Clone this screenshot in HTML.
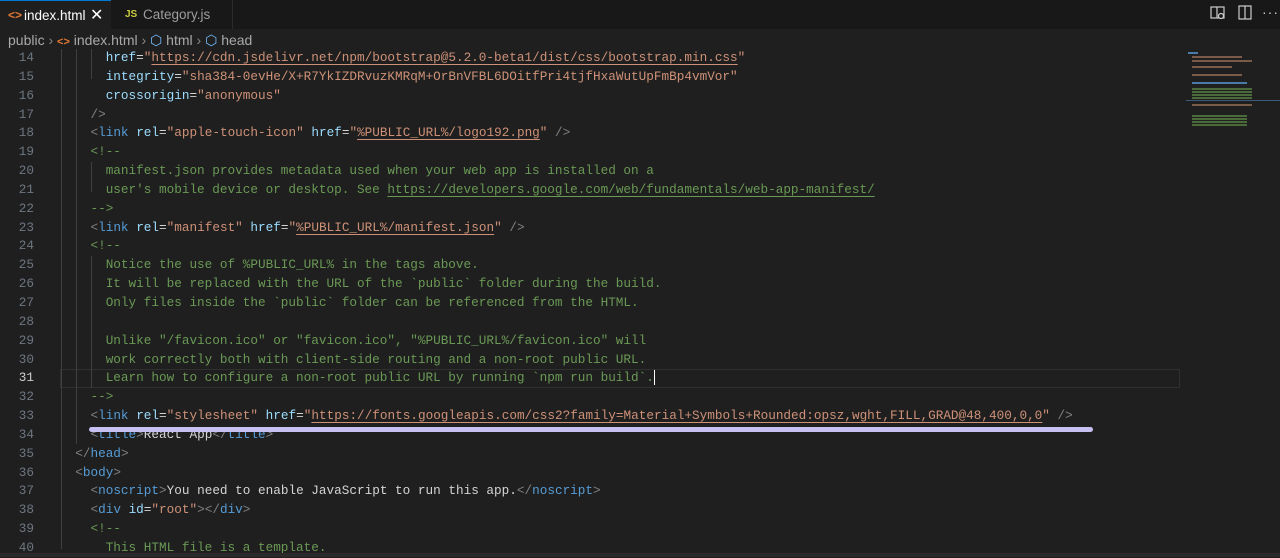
<!DOCTYPE html>
<html><head><meta charset="utf-8">
<style>
*{margin:0;padding:0;box-sizing:border-box}
body{width:1280px;height:557px;background:#1f1f1f;overflow:hidden;position:relative;font-family:"Liberation Sans",sans-serif}
.tabs{position:absolute;left:0;top:0;width:1280px;height:29px;background:#181818}
.tab{position:absolute;top:0;height:29px;font-size:13.5px;line-height:29px}
.t1{left:0;width:111px;background:#1f1f1f;color:#fff;border-top:1px solid #0078d4}
.t2{left:111px;width:122px;background:#181818;color:#9d9d9d;border-right:1px solid #2b2b2b}
.bc{position:absolute;top:29px;left:0;height:22px;line-height:22px;font-size:14px;color:#a9a9a9;padding-left:8px}
.code{position:absolute;left:0;top:49px;font-family:"Liberation Mono",monospace;font-size:12.7px;color:#d4d4d4}
.l{height:18.85px;line-height:18.85px;white-space:pre;position:relative}
.n{display:inline-block;width:34px;text-align:right;color:#6e7681;margin-right:26px}
.cur .n{color:#cccccc}
.p{color:#808080}.tg{color:#569cd6}.a{color:#9cdcfe}.s{color:#ce9178}.c{color:#6a9955}.e{color:#d4d4d4}
.u{text-decoration:underline;text-underline-offset:3px}
.guide{position:absolute;width:1px;background:#404040}
</style></head><body>
<div class="tabs">
 <div class="tab t1"><span style="position:absolute;left:8px;color:#e37933;font-size:12px;font-weight:bold">&lt;&gt;</span><span style="position:absolute;left:24px">index.html</span><span style="position:absolute;left:90px;font-size:16px">✕</span></div>
 <div class="tab t2"><span style="position:absolute;left:14px;color:#cbcb41;font-size:10px;font-weight:bold">JS</span><span style="position:absolute;left:32px">Category.js</span></div>
 <svg style="position:absolute;left:1210px;top:6px" width="16" height="15" viewBox="0 0 16 15" fill="none" stroke="#ccc" stroke-width="1.2"><rect x="1" y="1" width="13" height="11"/><line x1="7" y1="1" x2="7" y2="12"/><circle cx="11" cy="10" r="2.5" fill="#181818"/></svg>
 <svg style="position:absolute;left:1238px;top:5px" width="14" height="15" viewBox="0 0 14 15" fill="none" stroke="#ccc" stroke-width="1.2"><rect x="1" y="1" width="12" height="13"/><line x1="7" y1="1" x2="7" y2="14"/></svg>
 <span style="position:absolute;left:1262px;top:4px;color:#ccc;font-size:14px;letter-spacing:1px">···</span>
</div>
<div class="bc">public <span style="color:#888">›</span> <span style="color:#e37933;font-size:11px;font-weight:bold">&lt;&gt;</span> index.html <span style="color:#888">›</span> <span style="color:#75beff">⬡</span> html <span style="color:#888">›</span> <span style="color:#75beff">⬡</span> head</div>
<div style="position:absolute;left:60px;top:369px;width:1120px;height:19px;border:1px solid #303030"></div>
<div class="guide" style="left:61px;top:49px;height:500px"></div>
<div class="guide" style="left:76px;top:49px;height:395px"></div>
<div class="guide" style="left:91px;top:49px;height:30px"></div>
<div class="guide" style="left:91px;top:162px;height:30px"></div>
<div class="guide" style="left:91px;top:256px;height:132px"></div>
<div class="code">
<div class="l"><span class="n">14</span>      <span class="a">href</span><span class="e">=</span><span class="s">"<span class="u">https://cdn.jsdelivr.net/npm/bootstrap@5.2.0-beta1/dist/css/bootstrap.min.css</span>"</span></div>
<div class="l"><span class="n">15</span>      <span class="a">integrity</span><span class="e">=</span><span class="s">"sha384-0evHe/X+R7YkIZDRvuzKMRqM+OrBnVFBL6DOitfPri4tjfHxaWutUpFmBp4vmVor"</span></div>
<div class="l"><span class="n">16</span>      <span class="a">crossorigin</span><span class="e">=</span><span class="s">"anonymous"</span></div>
<div class="l"><span class="n">17</span>    <span class="p">/&gt;</span></div>
<div class="l"><span class="n">18</span>    <span class="p">&lt;</span><span class="tg">link</span> <span class="a">rel</span>=<span class="s">"apple-touch-icon"</span> <span class="a">href</span>=<span class="s">"<span class="u">%PUBLIC_URL%/logo192.png</span>"</span> <span class="p">/&gt;</span></div>
<div class="l"><span class="n">19</span>    <span class="c">&lt;!--</span></div>
<div class="l"><span class="n">20</span>      <span class="c">manifest.json provides metadata used when your web app is installed on a</span></div>
<div class="l"><span class="n">21</span>      <span class="c">user's mobile device or desktop. See <span class="u">https://developers.google.com/web/fundamentals/web-app-manifest/</span></span></div>
<div class="l"><span class="n">22</span>    <span class="c">--&gt;</span></div>
<div class="l"><span class="n">23</span>    <span class="p">&lt;</span><span class="tg">link</span> <span class="a">rel</span>=<span class="s">"manifest"</span> <span class="a">href</span>=<span class="s">"<span class="u">%PUBLIC_URL%/manifest.json</span>"</span> <span class="p">/&gt;</span></div>
<div class="l"><span class="n">24</span>    <span class="c">&lt;!--</span></div>
<div class="l"><span class="n">25</span>      <span class="c">Notice the use of %PUBLIC_URL% in the tags above.</span></div>
<div class="l"><span class="n">26</span>      <span class="c">It will be replaced with the URL of the `public` folder during the build.</span></div>
<div class="l"><span class="n">27</span>      <span class="c">Only files inside the `public` folder can be referenced from the HTML.</span></div>
<div class="l"><span class="n">28</span></div>
<div class="l"><span class="n">29</span>      <span class="c">Unlike "/favicon.ico" or "favicon.ico", "%PUBLIC_URL%/favicon.ico" will</span></div>
<div class="l"><span class="n">30</span>      <span class="c">work correctly both with client-side routing and a non-root public URL.</span></div>
<div class="l cur"><span class="n">31</span>      <span class="c">Learn how to configure a non-root public URL by running `npm run build`.</span><span style="border-left:1.5px solid #fff"> </span></div>
<div class="l"><span class="n">32</span>    <span class="c">--&gt;</span></div>
<div class="l"><span class="n">33</span>    <span class="p">&lt;</span><span class="tg">link</span> <span class="a">rel</span>=<span class="s">"stylesheet"</span> <span class="a">href</span>=<span class="s">"<span class="u">https://fonts.googleapis.com/css2?family=Material+Symbols+Rounded:opsz,wght,FILL,GRAD@48,400,0,0</span>"</span> <span class="p">/&gt;</span></div>
<div class="l"><span class="n">34</span>    <span class="p">&lt;</span><span class="tg">title</span><span class="p">&gt;</span>React App<span class="p">&lt;/</span><span class="tg">title</span><span class="p">&gt;</span></div>
<div class="l"><span class="n">35</span>  <span class="p">&lt;/</span><span class="tg">head</span><span class="p">&gt;</span></div>
<div class="l"><span class="n">36</span>  <span class="p">&lt;</span><span class="tg">body</span><span class="p">&gt;</span></div>
<div class="l"><span class="n">37</span>    <span class="p">&lt;</span><span class="tg">noscript</span><span class="p">&gt;</span>You need to enable JavaScript to run this app.<span class="p">&lt;/</span><span class="tg">noscript</span><span class="p">&gt;</span></div>
<div class="l"><span class="n">38</span>    <span class="p">&lt;</span><span class="tg">div</span> <span class="a">id</span>=<span class="s">"root"</span><span class="p">&gt;&lt;/</span><span class="tg">div</span><span class="p">&gt;</span></div>
<div class="l"><span class="n">39</span>    <span class="c">&lt;!--</span></div>
<div class="l"><span class="n">40</span>      <span class="c">This HTML file is a template.</span></div>
</div>
<div style="position:absolute;left:89px;top:427px;width:1004px;height:5px;border-radius:3px;background:#c6c0f2"></div>
<div style="position:absolute;left:1180px;top:49px;width:100px;height:508px;background:#1f1f1f"></div>
<div style="position:absolute;left:1188px;top:52px;width:10px;height:2px;background:#4a7aa8"></div>
<div style="position:absolute;left:1192px;top:56px;width:50px;height:2px;background:#7a5a48"></div>
<div style="position:absolute;left:1192px;top:60px;width:60px;height:2px;background:#7a5a48"></div>
<div style="position:absolute;left:1192px;top:66px;width:40px;height:2px;background:#7a5a48"></div>
<div style="position:absolute;left:1192px;top:74px;width:50px;height:2px;background:#7a5a48"></div>
<div style="position:absolute;left:1192px;top:82px;width:55px;height:2px;background:#4a7aa8"></div>
<div style="position:absolute;left:1192px;top:88px;width:60px;height:12px;background:repeating-linear-gradient(#4a6a3a 0 2px,transparent 2px 3px)"></div>
<div style="position:absolute;left:1186px;top:100px;width:94px;height:1px;background:#3a5a7a"></div>
<div style="position:absolute;left:1192px;top:104px;width:60px;height:2px;background:#7a5a48"></div>
<div style="position:absolute;left:1192px;top:115px;width:55px;height:12px;background:repeating-linear-gradient(#4a6a3a 0 2px,transparent 2px 3px)"></div>
<div style="position:absolute;left:0;top:553px;width:1280px;height:4px;background:#2a2a2a"></div>
</body></html>
